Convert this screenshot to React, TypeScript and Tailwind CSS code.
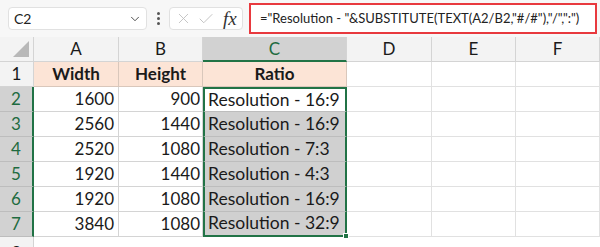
import { ChevronDown, X, Check } from "lucide-react";

const cols = ["A", "B", "C", "D", "E", "F"];
const widths = "grid-cols-[34px_85px_84px_144px_85px_84px_1fr]";

const rows = [
  ["1600", "900", "Resolution - 16:9"],
  ["2560", "1440", "Resolution - 16:9"],
  ["2520", "1080", "Resolution - 7:3"],
  ["1920", "1440", "Resolution - 4:3"],
  ["1920", "1080", "Resolution - 16:9"],
  ["3840", "1080", "Resolution - 32:9"],
];

const FormulaBar = () => (
  <div className="h-[37px] bg-[#f7f7f7] flex items-center pl-2 pr-[3px] gap-[6px]">
    <div className="w-[139px] h-[23px] bg-white border border-[#e1e1e1] rounded-[4px] flex items-center justify-between pl-[5px] pr-[4px] text-[14px] text-[#222]">
      <span>C2</span>
      <ChevronDown size={14} strokeWidth={1.6} className="text-[#444]" />
    </div>
    <div className="flex flex-col gap-[2px] w-[10px] items-center">
      <span className="w-[3px] h-[3px] rounded-full bg-[#555]" />
      <span className="w-[3px] h-[3px] rounded-full bg-[#555]" />
      <span className="w-[3px] h-[3px] rounded-full bg-[#555]" />
    </div>
    <div className="w-[74px] h-[23px] bg-white border border-[#e1e1e1] rounded-[4px] flex items-center pl-[5px] gap-[5px] text-[#bdbdbd]">
      <X size={17} strokeWidth={1.2} />
      <Check size={18} strokeWidth={1.2} />
      <span className="ml-[3px] text-[#333] text-[19px] italic font-['Liberation_Serif',serif] leading-none">
        fx
      </span>
    </div>
    <div className="flex-1 h-[31px] bg-white border-2 border-[#e8393e] flex items-center pl-[9px] text-[13px] text-[#222] whitespace-nowrap overflow-hidden">
      ="Resolution - "&amp;SUBSTITUTE(TEXT(A2/B2,"#/#"),"/",":")
    </div>
  </div>
);

export default function App() {
  return (
    <div className="w-[600px] h-[247px] overflow-hidden bg-white font-['Lato','Noto_Sans',sans-serif] text-[#1a1a1a]">
      <FormulaBar />
      <div className={`grid ${widths} auto-rows-[25px]`}>
        <div className="bg-[#f3f3f3] border-r border-b border-[#d4d4d4] flex items-end justify-end p-[4px]">
          <svg width="16" height="16" viewBox="0 0 16 16">
            <polygon points="16,0 16,16 0,16" fill="#b8b8b8" />
          </svg>
        </div>
        {cols.map((c) => (
          <div
            key={c}
            className={`flex items-center justify-center text-[17px] border-r border-[#d4d4d4] ${
              c === "C"
                ? "bg-[#d2d2d2] border-b-2 border-b-[#217346] text-[#1e6b40]"
                : "bg-[#f3f3f3] border-b border-b-[#d4d4d4]"
            }`}
          >
            {c}
          </div>
        ))}

        <div className="bg-[#f3f3f3] border-r border-b border-[#d4d4d4] flex items-center justify-center text-[17px]">
          1
        </div>
        {["Width", "Height", "Ratio"].map((h) => (
          <div
            key={h}
            className="bg-[#fce4d6] border-r border-b border-[#d9c7bb] flex items-center justify-center font-bold text-[17px]"
          >
            {h}
          </div>
        ))}
        <div className="border-r border-b border-[#e1e1e1]" />
        <div className="border-r border-b border-[#e1e1e1]" />
        <div className="border-r border-b border-[#e1e1e1]" />

        {rows.map((r, i) => (
          <div key={i} className="contents">
            <div className="bg-[#d2d2d2] border-r-2 border-r-[#217346] border-b border-b-[#bdbdbd] flex items-center justify-center text-[17px] text-[#1e6b40]">
              {i + 2}
            </div>
            <div className="border-r border-b border-[#d4d4d4] flex items-center justify-end pr-[4px] text-[17px]">
              {r[0]}
            </div>
            <div className="border-r border-b border-[#d4d4d4] flex items-center justify-end pr-[2px] text-[17px]">
              {r[1]}
            </div>
            <div
              className={`relative flex items-center pl-[3px] text-[17.5px] whitespace-nowrap border-x-2 border-x-[#217346] ${
                i === 0 ? "bg-white border-t-2 border-t-[#217346]" : "bg-[#d0d0d0]"
              } ${i === 5 ? "border-b-2 border-b-[#217346]" : "border-b border-b-[#bdbdbd]"}`}
            >
              {r[2]}
              {i === 5 && (
                <span className="absolute -right-[4px] -bottom-[4px] w-[6px] h-[6px] bg-[#217346] border border-white" />
              )}
            </div>
            <div className="border-r border-b border-[#e1e1e1]" />
            <div className="border-r border-b border-[#e1e1e1]" />
            <div className="border-r border-b border-[#e1e1e1]" />
          </div>
        ))}

        <div className="bg-[#f3f3f3] border-r border-[#d4d4d4] flex items-start justify-center text-[17px] leading-[20px] pt-[6px]">
          8
        </div>
      </div>
    </div>
  );
}
